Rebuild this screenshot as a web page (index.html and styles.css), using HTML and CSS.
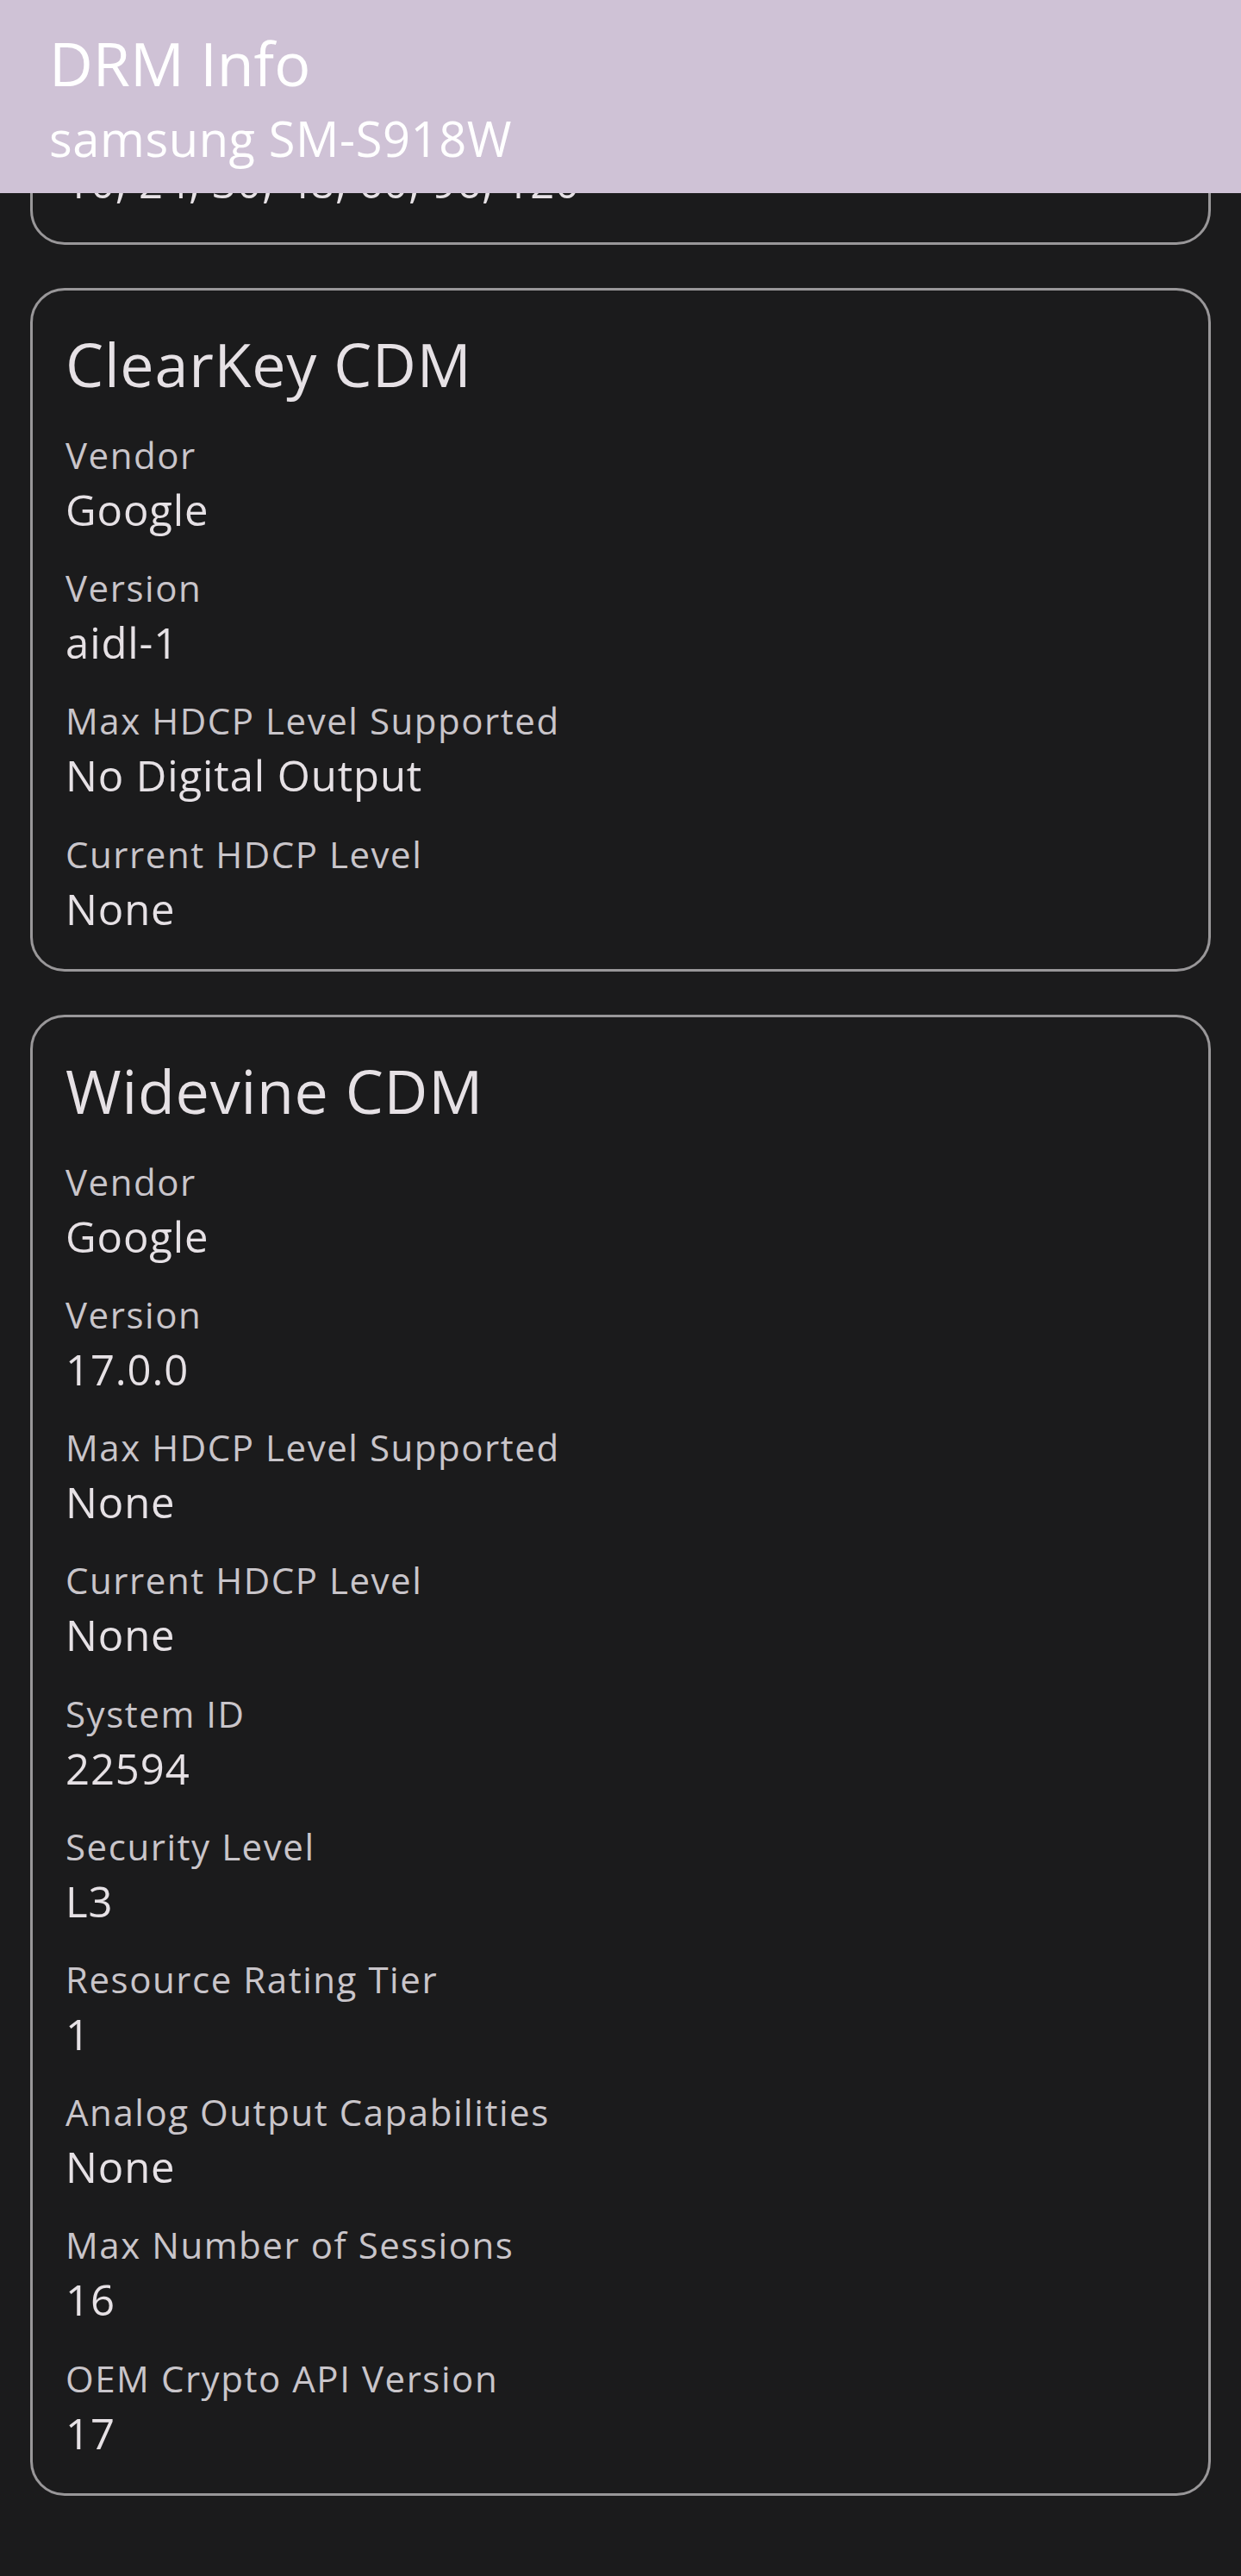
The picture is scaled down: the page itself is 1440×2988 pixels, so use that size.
FILE: index.html
```html
<!DOCTYPE html>
<html lang="en">
<head>
  <meta charset="UTF-8" />
  <meta name="viewport" content="width=device-width, initial-scale=1.0" />
  <title>DRM Info</title>
  <link rel="stylesheet" href="styles.css">
</head>
<body>
  <div class="top_bar">
    <div class="app_title">DRM Info</div>
    <div class="app_subtitle">samsung SM-S918W</div>
  </div>

  <div class="card_list">
    <!-- scrolled up under the bar -->
    <div class="info_card first_card">
      <h2 class="card_title">Display</h2>
      <div class="field">
        <div class="field_label">HDR Capabilities</div>
        <div class="field_value">HDR10, HDR10+, HLG</div>
      </div>
      <div class="field">
        <div class="field_label">Supported Refresh Rates</div>
        <div class="field_value">10, 24, 30, 48, 60, 96, 120</div>
      </div>
    </div>

    <div class="info_card">
      <h2 class="card_title">ClearKey CDM</h2>
      <div class="field">
        <div class="field_label">Vendor</div>
        <div class="field_value">Google</div>
      </div>
      <div class="field">
        <div class="field_label">Version</div>
        <div class="field_value">aidl-1</div>
      </div>
      <div class="field">
        <div class="field_label">Max HDCP Level Supported</div>
        <div class="field_value">No Digital Output</div>
      </div>
      <div class="field">
        <div class="field_label">Current HDCP Level</div>
        <div class="field_value">None</div>
      </div>
    </div>

    <div class="info_card">
      <h2 class="card_title">Widevine CDM</h2>
      <div class="field">
        <div class="field_label">Vendor</div>
        <div class="field_value">Google</div>
      </div>
      <div class="field">
        <div class="field_label">Version</div>
        <div class="field_value">17.0.0</div>
      </div>
      <div class="field">
        <div class="field_label">Max HDCP Level Supported</div>
        <div class="field_value">None</div>
      </div>
      <div class="field">
        <div class="field_label">Current HDCP Level</div>
        <div class="field_value">None</div>
      </div>
      <div class="field">
        <div class="field_label">System ID</div>
        <div class="field_value">22594</div>
      </div>
      <div class="field">
        <div class="field_label">Security Level</div>
        <div class="field_value">L3</div>
      </div>
      <div class="field">
        <div class="field_label">Resource Rating Tier</div>
        <div class="field_value">1</div>
      </div>
      <div class="field">
        <div class="field_label">Analog Output Capabilities</div>
        <div class="field_value">None</div>
      </div>
      <div class="field">
        <div class="field_label">Max Number of Sessions</div>
        <div class="field_value">16</div>
      </div>
      <div class="field">
        <div class="field_label">OEM Crypto API Version</div>
        <div class="field_value">17</div>
      </div>
    </div>
  </div>
</body>
</html>
```

FILE: styles.css
```css
body {
  margin: 0;
  background-color: #1b1b1c;
  font-family: 'Open Sans', 'Noto Sans', sans-serif;
  color: #e6e1e5;
  min-height: 2988px;
}

.top_bar {
  position: fixed;
  top: 0;
  left: 0;
  right: 0;
  z-index: 10;
  height: 224px;
  box-sizing: border-box;
  padding: 31px 57px 0;
  background-color: #cfc2d6;
  color: #ffffff;
}
.app_title {
  font-size: 70px;
  line-height: 84px;
}
.app_subtitle {
  margin-top: 7px;
  font-size: 56px;
  line-height: 76px;
  letter-spacing: 0.6px;
}

.card_list {
  display: flex;
  flex-direction: column;
  gap: 50px;
  padding: 0 35px;
}

.info_card {
  display: flex;
  flex-direction: column;
  gap: 28.2px;
  border: 3px solid #999799;
  border-radius: 40px;
  padding: 43px 37px 37.5px 38px;
}
.first_card {
  margin-top: -200px;
}

.card_title {
  margin: 0 0 5.5px;
  font-size: 70px;
  line-height: 84px;
  letter-spacing: 0.8px;
  font-weight: normal;
  color: #e6e1e5;
}

.field_label {
  font-size: 42px;
  line-height: 60px;
  letter-spacing: 1.55px;
  color: #c9c5ca;
}
.field_value {
  font-size: 49px;
  line-height: 66px;
  letter-spacing: 0.9px;
  color: #e6e1e5;
}
```
